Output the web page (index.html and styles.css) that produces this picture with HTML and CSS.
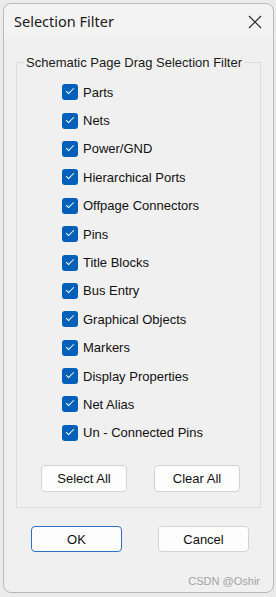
FILE: index.html
```html
<!DOCTYPE html>
<html lang="en">
<head>
    <meta charset="UTF-8">
    <title>Selection Filter</title>
    <link rel="stylesheet" href="styles.css">
</head>
<body>
    <div class="window">
        <div class="title-bar">
            <span class="title">Selection Filter</span>
            <svg class="close" width="14" height="14" viewBox="0 0 14 14">
                <path d="M1 1 L13 13 M13 1 L1 13" stroke="#222" stroke-width="1.1" fill="none"/>
            </svg>
        </div>

        <fieldset class="group">
            <legend>Schematic Page Drag Selection Filter</legend>
            <ul class="checks">
                <li><span class="box"></span>Parts</li>
                <li><span class="box"></span>Nets</li>
                <li><span class="box"></span>Power/GND</li>
                <li><span class="box"></span>Hierarchical Ports</li>
                <li><span class="box"></span>Offpage Connectors</li>
                <li><span class="box"></span>Pins</li>
                <li><span class="box"></span>Title Blocks</li>
                <li><span class="box"></span>Bus Entry</li>
                <li><span class="box"></span>Graphical Objects</li>
                <li><span class="box"></span>Markers</li>
                <li><span class="box"></span>Display Properties</li>
                <li><span class="box"></span>Net Alias</li>
                <li><span class="box"></span>Un - Connected Pins</li>
            </ul>
            <div class="group-buttons">
                <button class="btn small">Select All</button>
                <button class="btn small">Clear All</button>
            </div>
        </fieldset>

        <div class="dialog-buttons">
            <button class="btn wide default">OK</button>
            <button class="btn wide">Cancel</button>
        </div>

        <div class="watermark">CSDN @Oshir</div>
    </div>
</body>
</html>
```

FILE: styles.css
```css
/* Page behind the dialog */
body {
    margin: 0;
    height: 597px;
    background: #ebebeb;
    font-family: 'Liberation Sans', Arial, sans-serif;
    overflow: hidden;
}

.window {
    margin: 3px 2px 0 3px;
    height: 590px;
    box-sizing: border-box;
    background: #f0f0f0;
    border: 1px solid #b9b9b9;
    border-radius: 8px;
    position: relative;
}

.title-bar {
    height: 33px;
    display: flex;
    align-items: center;
    justify-content: space-between;
    padding: 0 11px 0 10px;
    background: #f3f3f3;
    border-radius: 8px 8px 0 0;
}

.title {
    font-family: 'Noto Sans', sans-serif;
    font-size: 14.5px;
    color: #1a1a1a;
}

.close {
    margin-top: 2px;
}

/* Group box */
.group {
    margin: 18px 12px 0 12px;
    padding: 0;
    height: 453px;
    box-sizing: border-box;
    border: 1px solid #dcdcdc;
    border-radius: 0;
}

.group legend {
    margin-left: 7px;
    padding: 0 2px;
    font-size: 13px;
    color: #1a1a1a;
}

.checks {
    list-style: none;
    margin: 8px 0 0 45px;
    padding: 0;
}

.checks li {
    height: 28.4px;
    display: flex;
    align-items: center;
    font-size: 13px;
    color: #111;
}

.box {
    width: 16px;
    height: 16px;
    margin-right: 5px;
    border-radius: 3px;
    background: #005fb8;
    position: relative;
}

.box::after {
    content: "";
    position: absolute;
    left: 4px;
    top: 4px;
    width: 7px;
    height: 3px;
    border-left: 1.5px solid #fff;
    border-bottom: 1.5px solid #fff;
    transform: rotate(-45deg);
}

.group-buttons {
    display: flex;
    justify-content: space-between;
    margin: 18px 20px 0 24px;
}

/* Buttons */
.btn {
    font-family: 'Liberation Sans', Arial, sans-serif;
    font-size: 13px;
    color: #111;
    background: #fdfdfd;
    border: 1px solid #d3d3d3;
    border-radius: 4px;
    padding: 0;
}

.small {
    width: 86px;
    height: 27px;
}

.dialog-buttons {
    display: flex;
    justify-content: space-between;
    margin: 18px 24px 0 27px;
}

.wide {
    width: 91px;
    height: 26px;
}

.default {
    border: 1.5px solid #2b72c4;
}

.watermark {
    position: absolute;
    right: 13px;
    bottom: 5px;
    font-size: 11px;
    color: #a2a2a2;
}
```
